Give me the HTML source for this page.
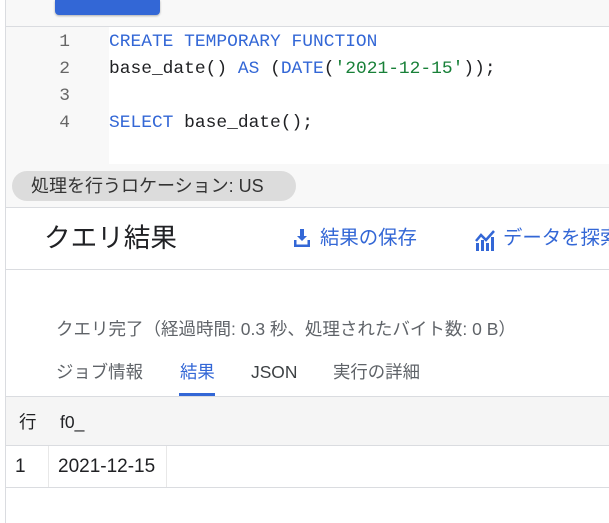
<!DOCTYPE html>
<html><head><meta charset="utf-8"><style>
body{margin:0;width:609px;height:523px;overflow:hidden;background:#fff;font-family:"Liberation Sans","Noto Sans CJK JP",sans-serif;position:relative}
.a{position:absolute;white-space:nowrap}
.mono{font-family:"Liberation Mono",monospace;font-size:17.9px}
.kw{color:#3367d6}.st{color:#188038}
</style></head><body>
<div class="a" style="left:5px;top:0;width:1px;height:523px;background:#dadce0"></div>
<div class="a" style="left:6px;top:0;width:603px;height:26px;background:#f8f8f8;border-bottom:1px solid #dadce0"></div>
<div class="a" style="left:55px;top:0;width:105px;height:15px;background:#3367d6;border-radius:0 0 4px 4px;box-shadow:0 1px 2px rgba(0,0,0,.3)"></div>
<div class="a" style="left:6px;top:27px;width:603px;height:180px;background:#f8f8f8;border-bottom:1px solid #dadce0"></div>
<div class="a" style="left:109px;top:27px;width:500px;height:137px;background:#fff"></div>
<div class="a mono" style="left:50px;top:29px;line-height:27px;color:#666;width:20px;text-align:right">1<br>2<br>3<br>4</div>
<div class="a mono" style="left:109px;top:29px;line-height:27px;color:#202124;white-space:pre"><span class="kw">CREATE TEMPORARY FUNCTION</span>
base_date() <span class="kw">AS</span> (<span class="kw">DATE</span>(<span class="st">'2021-12-15'</span>));

<span class="kw">SELECT</span> base_date();</div>
<div class="a" style="left:12px;top:171px;width:284px;height:30px;background:#dcdcdc;border-radius:15px;font-size:18px;line-height:30px;color:#333;padding-left:19px;box-sizing:border-box">処理を行うロケーション: US</div>
<div class="a" style="left:44px;top:222px;font-size:26.6px;line-height:32px;color:#202124">クエリ結果</div>
<svg class="a" style="left:292px;top:228px" width="20" height="20" viewBox="0 0 20 20"><path d="M8 1h4v7h3l-5 5-5-5h3z M2 12h2.5v4.5h11V12H18v7H2z" fill="#3367d6"/></svg>
<div class="a" style="left:320px;top:225px;font-size:19.4px;line-height:26px;color:#3367d6">結果の保存</div>
<svg class="a" style="left:475px;top:229px" width="22" height="22" viewBox="0 0 22 22"><path d="M1 22V14h3v8zM6 22V11h3v11zM11 22V14h3v8zM16 22V8h3v14z" fill="#3367d6"/><path d="M1 12l5-6 5 5 8-9" fill="none" stroke="#3367d6" stroke-width="2.5"/></svg>
<div class="a" style="left:503px;top:225px;font-size:19.4px;line-height:26px;color:#3367d6">データを探索</div>
<div class="a" style="left:6px;top:269px;width:603px;height:1px;background:#dadce0"></div>
<div class="a" style="left:56px;top:318px;font-size:17.5px;line-height:22px;color:#5f6368">クエリ完了（経過時間: 0.3 秒、処理されたバイト数: 0 B）</div>
<div class="a" style="left:56px;top:361px;font-size:17.4px;line-height:22px;color:#5f6368">ジョブ情報</div>
<div class="a" style="left:180px;top:361px;font-size:17.4px;line-height:22px;color:#3367d6">結果</div>
<div class="a" style="left:251px;top:361px;font-size:17.4px;line-height:22px;color:#3c4043">JSON</div>
<div class="a" style="left:333px;top:361px;font-size:17.4px;line-height:22px;color:#5f6368">実行の詳細</div>
<div class="a" style="left:179px;top:393px;width:36px;height:3px;background:#3367d6"></div>
<div class="a" style="left:6px;top:396px;width:603px;height:48px;background:#f5f5f5;border-top:1px solid #dadce0;border-bottom:1px solid #dadce0"></div>
<div class="a" style="left:19px;top:411px;font-size:17.5px;line-height:22px;color:#202124">行</div>
<div class="a" style="left:60px;top:411px;font-size:17.5px;line-height:22px;color:#202124">f0_</div>
<div class="a" style="left:48px;top:446px;width:1px;height:42px;background:#e8e8e8"></div>
<div class="a" style="left:166px;top:446px;width:1px;height:42px;background:#e8e8e8"></div>
<div class="a" style="left:6px;top:487px;width:603px;height:1px;background:#dadce0"></div>
<div class="a" style="left:15px;top:456px;font-size:19px;line-height:22px;color:#202124">1</div>
<div class="a" style="left:58px;top:456px;font-size:19px;line-height:22px;color:#202124">2021-12-15</div>
</body></html>
